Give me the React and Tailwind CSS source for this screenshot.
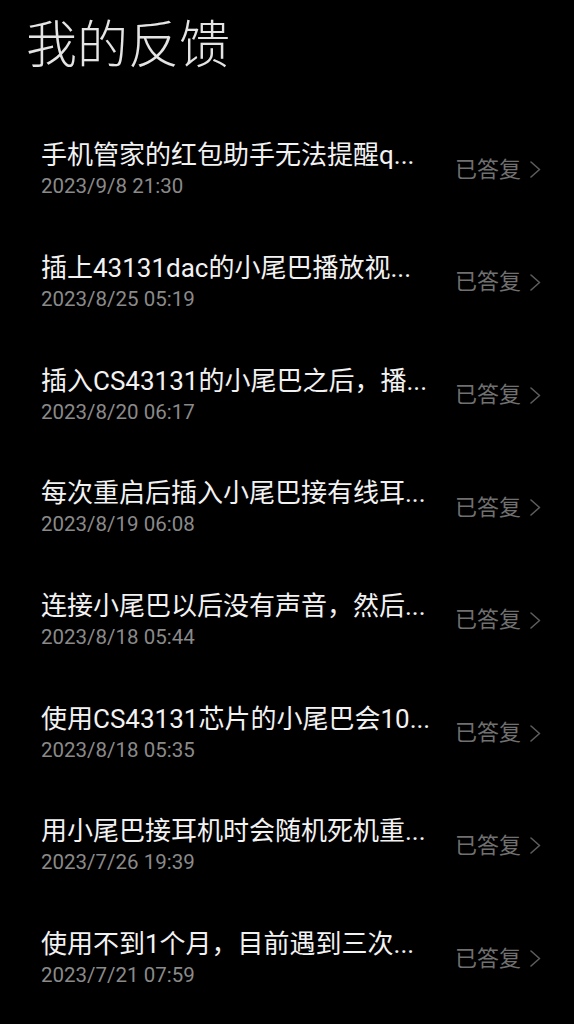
import { useState } from 'react';

const feedbacks = [
  { id: 1, title: '手机管家的红包助手无法提醒q...', time: '2023/9/8 21:30', status: '已答复' },
  { id: 2, title: '插上43131dac的小尾巴播放视...', time: '2023/8/25 05:19', status: '已答复' },
  { id: 3, title: '插入CS43131的小尾巴之后，播...', time: '2023/8/20 06:17', status: '已答复' },
  { id: 4, title: '每次重启后插入小尾巴接有线耳...', time: '2023/8/19 06:08', status: '已答复' },
  { id: 5, title: '连接小尾巴以后没有声音，然后...', time: '2023/8/18 05:44', status: '已答复' },
  { id: 6, title: '使用CS43131芯片的小尾巴会10...', time: '2023/8/18 05:35', status: '已答复' },
  { id: 7, title: '用小尾巴接耳机时会随机死机重...', time: '2023/7/26 19:39', status: '已答复' },
  { id: 8, title: '使用不到1个月，目前遇到三次...', time: '2023/7/21 07:59', status: '已答复' },
];

const font = { fontFamily: 'Roboto, "Noto Sans CJK SC", sans-serif' };

function Chevron() {
  return (
    <svg width="13" height="17" viewBox="0 0 13 17" fill="none" className="shrink-0">
      <path d="M2 1 L10.5 8.5 L2 16" stroke="#5c5c5c" strokeWidth="1.6" strokeLinecap="round" strokeLinejoin="round" />
    </svg>
  );
}

function FeedbackRow({ item, onOpen }) {
  return (
    <button
      onClick={() => onOpen(item.id)}
      className="w-full h-[112.7px] flex items-center pl-[41px] pr-[32px] text-left"
    >
      <div className="flex-1 min-w-0">
        <p className="text-[26px] leading-[34px] text-[#f2f2f2] whitespace-nowrap overflow-hidden text-ellipsis">{item.title}</p>
        <p className="text-[20.5px] leading-[29px] text-[#8a8a8a]">{item.time}</p>
      </div>
      <div className="flex items-center gap-[8px] ml-[12px] shrink-0">
        <span className="text-[22px] leading-[30px] text-[#707070]">{item.status}</span>
        <Chevron />
      </div>
    </button>
  );
}

export default function App() {
  const [openId, setOpenId] = useState(null);

  return (
    <div className="min-h-screen w-full bg-black overflow-hidden" style={font}>
      <div className="h-[113.4px] pt-[21px] pl-[26px]">
        <h1 className="text-[51px] leading-[50px] font-light text-[#e4e4e4]">我的反馈</h1>
      </div>
      <div data-open={openId ?? ''}>
        {feedbacks.map((f) => (
          <FeedbackRow key={f.id} item={f} onOpen={setOpenId} />
        ))}
      </div>
    </div>
  );
}
